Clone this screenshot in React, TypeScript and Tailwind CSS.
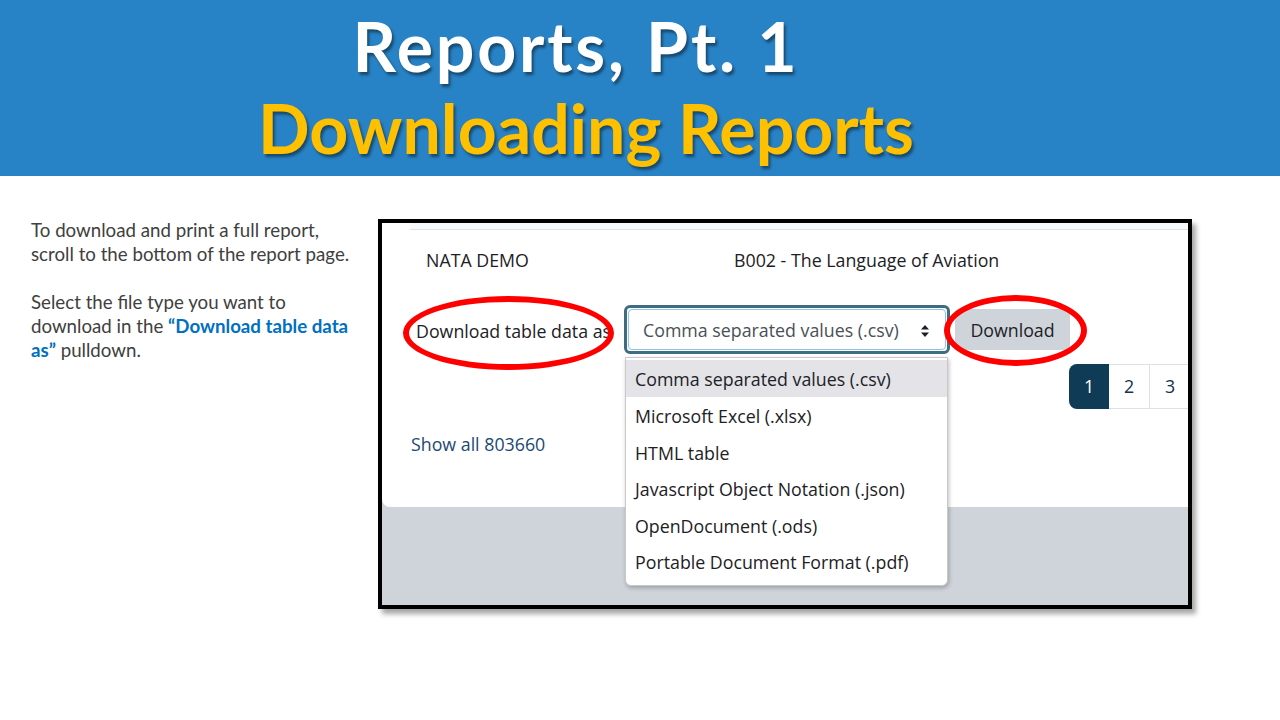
import React from 'react';

const options = [
    'Comma separated values (.csv)',
    'Microsoft Excel (.xlsx)',
    'HTML table',
    'Javascript Object Notation (.json)',
    'OpenDocument (.ods)',
    'Portable Document Format (.pdf)',
];

const SortArrows: React.FC = () => (
    <svg width="10" height="14" viewBox="0 0 10 14" className="shrink-0">
        <path d="M5 1 L9 5.5 H1 Z" fill="#1d2125" />
        <path d="M5 13 L9 8.5 H1 Z" fill="#1d2125" />
    </svg>
);

const ReportShot: React.FC = () => {
    return (
        <div className="relative w-[814px] h-[390px] border-4 border-black shadow-[4px_5px_5px_rgba(0,0,0,0.35)] bg-[#ced4da] overflow-hidden" style={{ fontFamily: '"Open Sans", "Noto Sans", sans-serif' }}>
            {/* white report card */}
            <div className="w-[830px] h-[284px] bg-white rounded-bl-lg flex flex-col text-[17.8px] text-[#1d2125]">
                <div className="ml-[28px] h-[7px] bg-[#f8f9fa] border-b border-[#dee2e6]" />
                <div className="h-[60px] flex items-center">
                    <div className="ml-[44px] w-[308px]">NATA DEMO</div>
                    <div>B002 - The Language of Aviation</div>
                </div>
                <div className="mt-[15px] h-[49px] flex items-center">
                    <div className="ml-[34px] w-[208px] pt-[4px]">Download table data as</div>
                    <div className="w-[326px] h-[49px] rounded-md border-[3px] border-[#3e6c80] p-[1px]">
                        <div className="h-full rounded-[4px] border border-[#8fc3e8] flex items-center justify-between pl-[14px] pr-[15px] pt-[2px] text-[#495057]">
                            <span>Comma separated values (.csv)</span>
                            <SortArrows />
                        </div>
                    </div>
                    <button className="ml-[5px] w-[115px] h-[41px] bg-[#ced4da] text-[#1d2125] rounded-sm pt-[2px]">Download</button>
                </div>
                <div className="mt-[10px] ml-[687px] flex h-[45px]">
                    <div className="w-[40px] h-full bg-[#0f3b57] text-white rounded-l-lg flex items-center justify-center">1</div>
                    <div className="w-[41px] h-full border border-[#dee2e6] border-l-0 text-[#15324a] flex items-center justify-center">2</div>
                    <div className="w-[41px] h-full border border-[#dee2e6] border-l-0 text-[#15324a] flex items-center justify-center">3</div>
                </div>
                <div className="mt-[23px] ml-[29px] leading-6 text-[#1b4a72]">Show all 803660</div>
            </div>

            {/* open dropdown list */}
            <div className="absolute left-[243px] top-[134px] w-[323px] h-[229px] bg-white border border-[#c8c8c8] rounded-b-md shadow-[1px_2px_4px_rgba(0,0,0,0.25)] pt-[2px] text-[17.8px] text-[#1d2125]">
                {options.map((o, i) => (
                    <div key={o} className={`h-[36.6px] flex items-center pl-[9px] pt-[3px] ${i === 0 ? 'bg-[#e3e3e8]' : ''}`}>
                        {o}
                    </div>
                ))}
            </div>

            {/* highlight rings */}
            <div className="absolute left-[21px] top-[73px] w-[211px] h-[74px] rounded-[50%] border-[6px] border-[#ff0000]" />
            <div className="absolute left-[562px] top-[72px] w-[143px] h-[71px] rounded-[50%] border-[6px] border-[#ff0000]" />
        </div>
    );
};

export default function App() {
    return (
        <div className="w-[1280px] h-[720px] bg-white overflow-hidden" style={{ fontFamily: 'Lato, "Open Sans", sans-serif' }}>
            <div className="h-[176px] bg-[#2883c6] flex flex-col font-bold [text-shadow:2px_3px_3px_rgba(0,0,0,0.45)]">
                <div className="pr-[128px] text-center text-white text-[68px] leading-[76px] pt-[8px] tracking-[2.8px]">Reports, Pt. 1</div>
                <div className="pr-[108px] text-center text-[#ffc000] text-[68px] leading-[76px] pt-[6px]">Downloading Reports</div>
            </div>
            <div className="flex items-start pt-[43px]">
                <div className="w-[378px] pl-[31px] -mt-[1px] text-[18.7px] leading-6 text-[#404040]">
                    <p>To download and print a full report,<br />scroll to the bottom of the report page.</p>
                    <p className="mt-6">
                        Select the file type you want to<br />download in the{' '}
                        <span className="font-bold text-[#0070c0]">“Download table data<br />as”</span> pulldown.
                    </p>
                </div>
                <ReportShot />
            </div>
        </div>
    );
}
